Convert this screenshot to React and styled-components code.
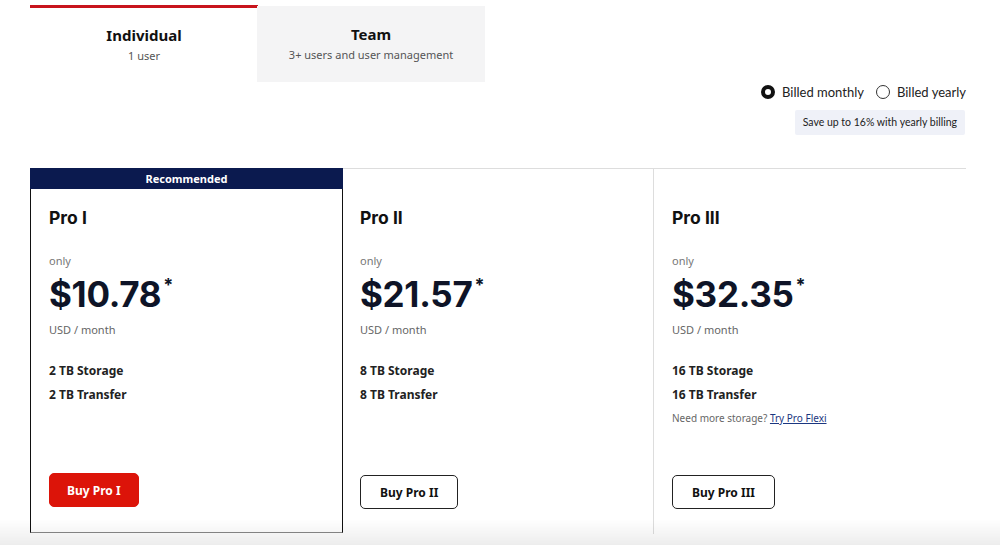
import React, { useState } from "react";
import styled, { createGlobalStyle } from "styled-components";

const GlobalStyle = createGlobalStyle`
  body {
    margin: 0;
    background: #fff;
    font-family: "Noto Sans", "Open Sans", sans-serif;
    color: #111;
  }
`;

const Page = styled.div`
  width: 936px;
  margin-left: 30px;
  padding-top: 5px;
`;

const Tabs = styled.div`
  display: flex;
  height: 77px;
`;

const Tab = styled.div`
  width: 228px;
  box-sizing: border-box;
  display: flex;
  flex-direction: column;
  align-items: center;
  border-top: 3px solid ${(p) => (p.active ? "#c8141c" : "transparent")};
  background: ${(p) => (p.active ? "#fff" : "#f4f4f5")};
  padding-top: ${(p) => (p.active ? "16px" : "14px")};
  margin-top: ${(p) => (p.active ? "0" : "1px")};
  margin-left: ${(p) => (p.active ? "0" : "-1px")};
  .title {
    font-size: 15px;
    font-weight: 700;
    line-height: 22px;
    color: #111;
  }
  .sub {
    font-size: 11px;
    line-height: 16px;
    margin-top: 2px;
    color: #555;
  }
`;

const Billing = styled.div`
  display: flex;
  flex-direction: column;
  align-items: flex-end;
  height: 86px;
  font-family: Lato, "Noto Sans", sans-serif;
`;

const Toggle = styled.div`
  display: flex;
  gap: 12px;
  align-items: center;
  height: 20px;
`;

const Option = styled.label`
  display: flex;
  align-items: center;
  gap: 7px;
  font-size: 13px;
  color: #222;
  cursor: pointer;
`;

const Radio = styled.span`
  width: 14px;
  height: 14px;
  border-radius: 50%;
  box-sizing: border-box;
  border: ${(p) => (p.checked ? "4px solid #111" : "1px solid #333")};
  background: #fff;
`;

const SaveNote = styled.div`
  margin-top: 8px;
  margin-right: 1px;
  background: #eff1f8;
  color: #222;
  font-size: 10.5px;
  padding: 5px 8px;
  line-height: 15px;
  border-radius: 2px;
`;

const Plans = styled.div`
  display: grid;
  grid-template-columns: 312px 312px 312px;
  border-top: 1px solid #ddd;
`;

const Card = styled.div`
  position: relative;
  height: 365px;
  box-sizing: border-box;
  display: flex;
  flex-direction: column;
  padding: 37px 18px 25px;
  border-left: ${(p) => (p.recommended ? "1px solid #111" : "none")};
  border-right: ${(p) =>
    p.recommended ? "1px solid #111" : p.last ? "none" : "1px solid #ddd"};
  border-bottom: ${(p) => (p.recommended ? "1px solid #888" : "none")};
  margin-top: ${(p) => (p.recommended ? "-1px" : "0")};
  padding-top: ${(p) => (p.recommended ? "38px" : "37px")};
  margin-right: ${(p) => (p.recommended ? "-1px" : "0")};
`;

const Badge = styled.div`
  position: absolute;
  top: 0;
  left: -1px;
  right: -1px;
  height: 21px;
  background: #0b1a4f;
  color: #fff;
  font-size: 11px;
  font-weight: 700;
  display: flex;
  align-items: center;
  justify-content: center;
`;

const PlanName = styled.div`
  font-family: Inter, "Noto Sans", sans-serif;
  font-size: 17.5px;
  font-weight: 700;
  line-height: 24px;
  color: #111;
`;

const Only = styled.div`
  margin-top: 23px;
  font-size: 11px;
  line-height: 16px;
  color: #777;
`;

const Price = styled.div`
  margin-top: 3px;
  display: flex;
  align-items: flex-start;
  font-family: Inter, "Noto Sans", sans-serif;
  font-size: 35px;
  font-weight: 700;
  line-height: 44px;
  color: #0e1427;
  letter-spacing: -0.3px;
  sup {
    font-size: 18px;
    line-height: 18px;
    margin-left: 2px;
    margin-top: 4px;
  }
`;

const Unit = styled.div`
  margin-top: 6px;
  font-size: 11px;
  line-height: 16px;
  color: #666;
`;

const Features = styled.div`
  margin-top: 21px;
  display: flex;
  flex-direction: column;
`;

const Feature = styled.div`
  font-size: 12px;
  font-weight: 700;
  line-height: 24px;
  color: #222;
`;

const Note = styled.div`
  margin-top: 3px;
  font-size: 10px;
  line-height: 16px;
  color: #666;
  a {
    color: #1b3680;
    text-decoration: underline;
  }
`;

const BuyButton = styled.button`
  margin-top: auto;
  align-self: flex-start;
  height: 34px;
  padding: 0 ${(p) => (p.primary ? "17px" : "19px")};
  border-radius: 5px;
  font-family: "Noto Sans", sans-serif;
  font-size: 12px;
  font-weight: 700;
  cursor: pointer;
  color: ${(p) => (p.primary ? "#fff" : "#111")};
  background: ${(p) => (p.primary ? "#dc1409" : "#fff")};
  border: ${(p) => (p.primary ? "1px solid #dc1409" : "1.5px solid #222")};
`;

const BottomFade = styled.div`
  position: fixed;
  left: 0;
  right: 0;
  bottom: 0;
  height: 26px;
  background: linear-gradient(rgba(0, 0, 0, 0), rgba(0, 0, 0, 0.07));
  pointer-events: none;
`;

const plans = [
  {
    name: "Pro I",
    price: "$10.78",
    storage: "2 TB Storage",
    transfer: "2 TB Transfer",
    recommended: true,
  },
  {
    name: "Pro II",
    price: "$21.57",
    storage: "8 TB Storage",
    transfer: "8 TB Transfer",
  },
  {
    name: "Pro III",
    price: "$32.35",
    storage: "16 TB Storage",
    transfer: "16 TB Transfer",
    flexi: true,
  },
];

const App = () => {
  const [billing, setBilling] = useState("monthly");

  return (
    <>
      <GlobalStyle />
      <Page>
        <Tabs>
          <Tab active>
            <div className="title">Individual</div>
            <div className="sub">1 user</div>
          </Tab>
          <Tab>
            <div className="title">Team</div>
            <div className="sub">3+ users and user management</div>
          </Tab>
        </Tabs>

        <Billing>
          <Toggle>
            <Option onClick={() => setBilling("monthly")}>
              <Radio checked={billing === "monthly"} />
              Billed monthly
            </Option>
            <Option onClick={() => setBilling("yearly")}>
              <Radio checked={billing === "yearly"} />
              Billed yearly
            </Option>
          </Toggle>
          <SaveNote>Save up to 16% with yearly billing</SaveNote>
        </Billing>

        <Plans>
          {plans.map((plan, i) => (
            <Card
              key={plan.name}
              recommended={plan.recommended}
              last={i === plans.length - 1}
            >
              {plan.recommended && <Badge>Recommended</Badge>}
              <PlanName>{plan.name}</PlanName>
              <Only>only</Only>
              <Price>
                {plan.price}
                <sup>*</sup>
              </Price>
              <Unit>USD / month</Unit>
              <Features>
                <Feature>{plan.storage}</Feature>
                <Feature>{plan.transfer}</Feature>
              </Features>
              {plan.flexi && (
                <Note>
                  Need more storage? <a href="#">Try Pro Flexi</a>
                </Note>
              )}
              <BuyButton primary={plan.recommended}>Buy {plan.name}</BuyButton>
            </Card>
          ))}
        </Plans>
      </Page>
      <BottomFade />
    </>
  );
};

export default App;
